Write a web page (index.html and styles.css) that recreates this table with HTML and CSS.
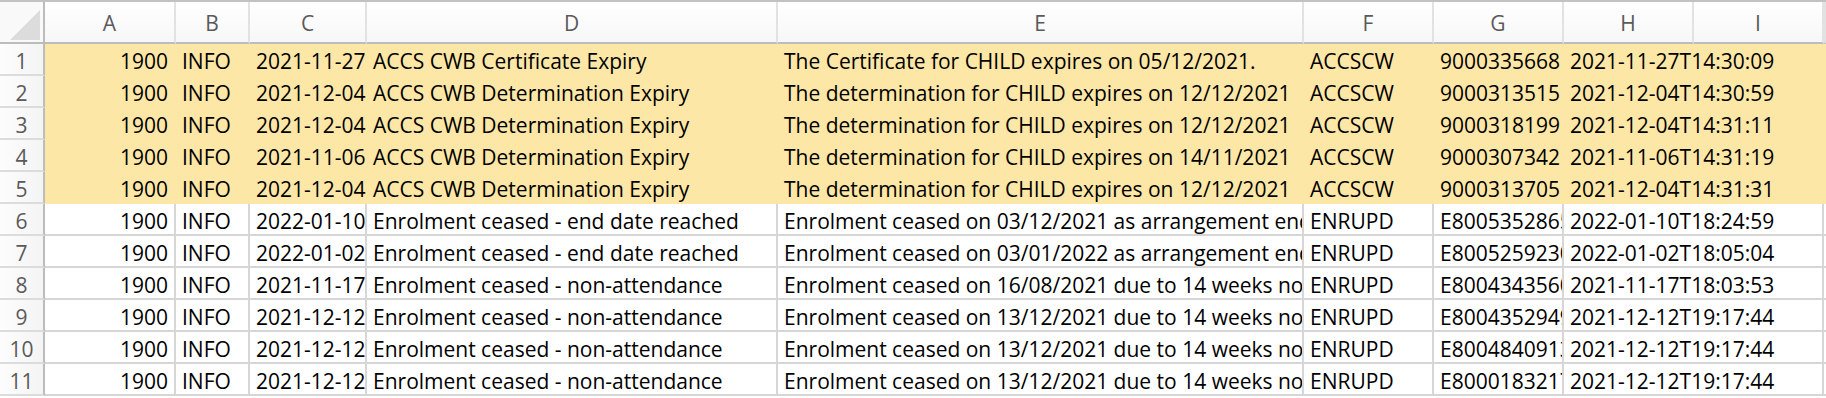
FILE: index.html
```html
<!DOCTYPE html>
<html lang="en">
<head>
<meta charset="utf-8">
<title>Sheet</title>
<link rel="stylesheet" href="styles.css">
</head>
<body>
<div class="sheet">
  <div class="row head">
    <div class="corner"><span class="tri"></span></div>
    <div class="ch">A</div>
    <div class="ch">B</div>
    <div class="ch">C</div>
    <div class="ch">D</div>
    <div class="ch">E</div>
    <div class="ch">F</div>
    <div class="ch">G</div>
    <div class="ch">H</div>
    <div class="ch">I</div>
    <div class="ch"></div>
  </div>

  <div class="row fill">
    <div class="rh">1</div>
    <div class="c num">1900</div>
    <div class="c">INFO</div>
    <div class="c">2021-11-27</div>
    <div class="c">ACCS CWB Certificate Expiry</div>
    <div class="c">The Certificate for CHILD expires on 05/12/2021.</div>
    <div class="c">ACCSCW</div>
    <div class="c">9000335668</div>
    <div class="c span2">2021-11-27T14:30:09</div>
    <div class="c"></div>
  </div>
  <div class="row fill">
    <div class="rh">2</div>
    <div class="c num">1900</div>
    <div class="c">INFO</div>
    <div class="c">2021-12-04</div>
    <div class="c">ACCS CWB Determination Expiry</div>
    <div class="c">The determination for CHILD expires on 12/12/2021</div>
    <div class="c">ACCSCW</div>
    <div class="c">9000313515</div>
    <div class="c span2">2021-12-04T14:30:59</div>
    <div class="c"></div>
  </div>
  <div class="row fill">
    <div class="rh">3</div>
    <div class="c num">1900</div>
    <div class="c">INFO</div>
    <div class="c">2021-12-04</div>
    <div class="c">ACCS CWB Determination Expiry</div>
    <div class="c">The determination for CHILD expires on 12/12/2021</div>
    <div class="c">ACCSCW</div>
    <div class="c">9000318199</div>
    <div class="c span2">2021-12-04T14:31:11</div>
    <div class="c"></div>
  </div>
  <div class="row fill">
    <div class="rh">4</div>
    <div class="c num">1900</div>
    <div class="c">INFO</div>
    <div class="c">2021-11-06</div>
    <div class="c">ACCS CWB Determination Expiry</div>
    <div class="c">The determination for CHILD expires on 14/11/2021</div>
    <div class="c">ACCSCW</div>
    <div class="c">9000307342</div>
    <div class="c span2">2021-11-06T14:31:19</div>
    <div class="c"></div>
  </div>
  <div class="row fill">
    <div class="rh">5</div>
    <div class="c num">1900</div>
    <div class="c">INFO</div>
    <div class="c">2021-12-04</div>
    <div class="c">ACCS CWB Determination Expiry</div>
    <div class="c">The determination for CHILD expires on 12/12/2021</div>
    <div class="c">ACCSCW</div>
    <div class="c">9000313705</div>
    <div class="c span2">2021-12-04T14:31:31</div>
    <div class="c"></div>
  </div>

  <div class="row">
    <div class="rh">6</div>
    <div class="c num">1900</div>
    <div class="c">INFO</div>
    <div class="c">2022-01-10</div>
    <div class="c">Enrolment ceased - end date reached</div>
    <div class="c">Enrolment ceased on 03/12/2021 as arrangement ended</div>
    <div class="c">ENRUPD</div>
    <div class="c">E8005352865</div>
    <div class="c span2">2022-01-10T18:24:59</div>
    <div class="c"></div>
  </div>
  <div class="row">
    <div class="rh">7</div>
    <div class="c num">1900</div>
    <div class="c">INFO</div>
    <div class="c">2022-01-02</div>
    <div class="c">Enrolment ceased - end date reached</div>
    <div class="c">Enrolment ceased on 03/01/2022 as arrangement ended</div>
    <div class="c">ENRUPD</div>
    <div class="c">E8005259230</div>
    <div class="c span2">2022-01-02T18:05:04</div>
    <div class="c"></div>
  </div>
  <div class="row">
    <div class="rh">8</div>
    <div class="c num">1900</div>
    <div class="c">INFO</div>
    <div class="c">2021-11-17</div>
    <div class="c">Enrolment ceased - non-attendance</div>
    <div class="c">Enrolment ceased on 16/08/2021 due to 14 weeks non-attendance</div>
    <div class="c">ENRUPD</div>
    <div class="c">E8004343560</div>
    <div class="c span2">2021-11-17T18:03:53</div>
    <div class="c"></div>
  </div>
  <div class="row">
    <div class="rh">9</div>
    <div class="c num">1900</div>
    <div class="c">INFO</div>
    <div class="c">2021-12-12</div>
    <div class="c">Enrolment ceased - non-attendance</div>
    <div class="c">Enrolment ceased on 13/12/2021 due to 14 weeks non-attendance</div>
    <div class="c">ENRUPD</div>
    <div class="c">E8004352949</div>
    <div class="c span2">2021-12-12T19:17:44</div>
    <div class="c"></div>
  </div>
  <div class="row">
    <div class="rh">10</div>
    <div class="c num">1900</div>
    <div class="c">INFO</div>
    <div class="c">2021-12-12</div>
    <div class="c">Enrolment ceased - non-attendance</div>
    <div class="c">Enrolment ceased on 13/12/2021 due to 14 weeks non-attendance</div>
    <div class="c">ENRUPD</div>
    <div class="c">E8004840913</div>
    <div class="c span2">2021-12-12T19:17:44</div>
    <div class="c"></div>
  </div>
  <div class="row">
    <div class="rh">11</div>
    <div class="c num">1900</div>
    <div class="c">INFO</div>
    <div class="c">2021-12-12</div>
    <div class="c">Enrolment ceased - non-attendance</div>
    <div class="c">Enrolment ceased on 13/12/2021 due to 14 weeks non-attendance</div>
    <div class="c">ENRUPD</div>
    <div class="c">E8000183217</div>
    <div class="c span2">2021-12-12T19:17:44</div>
    <div class="c"></div>
  </div>
</div>
</body>
</html>
```
FILE: styles.css
```css
* { box-sizing: border-box; }
html, body {
  margin: 0;
  padding: 0;
  background: #ffffff;
  overflow: hidden;
}
.sheet {
  width: 1826px;
  font-family: "Open Sans", "DejaVu Sans", sans-serif;
  font-size: 21px;
  color: #000;
}
.row {
  display: grid;
  grid-template-columns: 45px 131px 74px 117px 411px 526px 130px 130px 130px 130px 2px;
  height: 32px;
}
.row.head {
  height: 44px;
  border-top: 2px solid #c2c2c2;
}
.corner {
  position: relative;
  background: #f9f9f9;
  border-right: 2px solid #bcbcbc;
  border-bottom: 2px solid #bcbcbc;
}
.tri {
  position: absolute;
  left: 10px;
  top: 8px;
  width: 30px;
  height: 30px;
  background: #dcdcdc;
  clip-path: polygon(100% 0, 100% 100%, 0 100%);
}
.ch {
  background: linear-gradient(#ffffff, #f7f7f7);
  border-right: 2px solid #e2e2e2;
  border-bottom: 2px solid #bcbcbc;
  color: #5a5a5a;
  text-align: center;
  padding-top: 3px;
  line-height: 37px;
}
.rh {
  background: linear-gradient(to right, #fdfdfd, #f4f4f4);
  border-right: 2px solid #bcbcbc;
  border-bottom: 2px solid #dcdcdc;
  color: #5a5a5a;
  text-align: center;
  padding-top: 5px;
  line-height: 25px;
}
.c {
  border-right: 2px solid #d6d6d6;
  border-bottom: 2px solid #d6d6d6;
  padding: 5px 4px 0 6px;
  line-height: 25px;
  white-space: nowrap;
  overflow: hidden;
}
.c.num {
  text-align: right;
  padding-right: 6px;
}
.c.span2 {
  grid-column: span 2;
}
.fill .c {
  background: #fde7a7;
  border-color: #fde7a7;
  overflow: visible;
}
```
